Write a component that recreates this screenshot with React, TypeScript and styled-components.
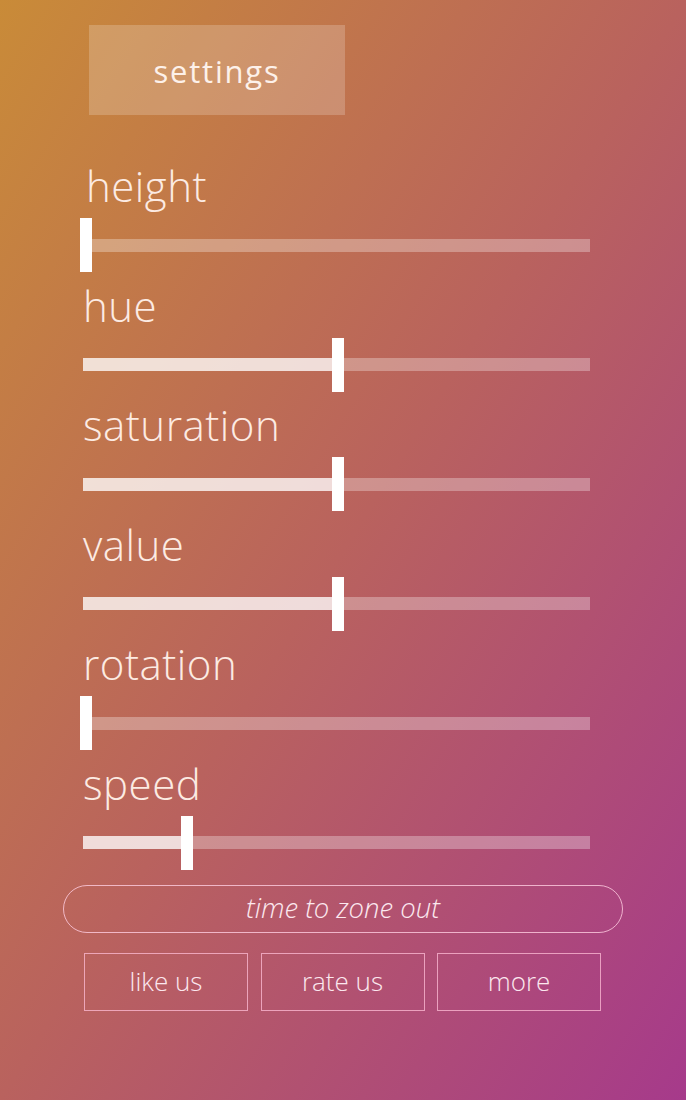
import React from "react";
import styled, { createGlobalStyle } from "styled-components";

const GlobalStyle = createGlobalStyle`
  html, body {
    margin: 0;
    padding: 0;
  }
  body {
    font-family: "Open Sans", "Noto Sans", sans-serif;
    color: #fcebe3;
  }
  * { box-sizing: border-box; }
`;

const Page = styled.div`
  width: 686px;
  min-height: 1100px;
  background: linear-gradient(to bottom right, #c98b38 0%, #b9625e 50%, #a63a8b 100%);
  padding-top: 25px;
  display: flex;
  flex-direction: column;
`;

const SettingsBox = styled.div`
  margin-left: 89px;
  width: 256px;
  height: 90px;
  background: rgba(255, 255, 255, 0.2);
  display: flex;
  align-items: center;
  justify-content: center;
  font-size: 31px;
  font-weight: 400;
  letter-spacing: 1.8px;
  color: #fdf1ea;
  padding-top: 1px;
`;

const SliderList = styled.div`
  margin-top: 43px;
  margin-left: 83px;
  width: 507px;
  display: flex;
  flex-direction: column;
  gap: 5.6px;
`;

const Row = styled.div`
  display: flex;
  flex-direction: column;
`;

const Label = styled.div<{ $indent: number }>`
  height: 56px;
  line-height: 55px;
  font-size: 42px;
  font-weight: 300;
  padding-left: ${(p) => p.$indent}px;
  letter-spacing: 0.5px;
  color: #fcebe3;
  white-space: nowrap;
`;

const SliderArea = styled.div`
  position: relative;
  height: 54px;
  margin-top: 4px;
  display: flex;
  align-items: center;
`;

const Track = styled.div`
  width: 100%;
  height: 13px;
  background: rgba(255, 255, 255, 0.3);
  display: flex;
`;

const Fill = styled.div`
  height: 100%;
  background: rgba(255, 255, 255, 0.68);
`;

const Thumb = styled.div`
  position: absolute;
  top: 0;
  width: 12px;
  height: 54px;
  background: #ffffff;
`;

const Footer = styled.div`
  margin-top: 15px;
  display: flex;
  flex-direction: column;
  align-items: flex-start;
`;

const Pill = styled.button`
  margin-left: 63px;
  width: 560px;
  height: 48px;
  border: 1.5px solid rgba(255, 205, 225, 0.8);
  border-radius: 24px;
  background: transparent;
  font-family: "Open Sans", "Noto Sans", sans-serif;
  font-style: italic;
  font-weight: 300;
  font-size: 27.5px;
  color: #fce8ef;
  display: flex;
  align-items: center;
  justify-content: center;
  padding: 0 0 2px 0;
`;

const ButtonRow = styled.div`
  margin-top: 20px;
  margin-left: 84px;
  display: flex;
  gap: 12.5px;
`;

const LinkButton = styled.button`
  width: 164px;
  height: 58px;
  border: 1.5px solid rgba(255, 190, 215, 0.75);
  background: transparent;
  font-family: "Open Sans", "Noto Sans", sans-serif;
  font-weight: 300;
  font-size: 26px;
  color: #fce8ef;
  display: flex;
  align-items: center;
  justify-content: center;
  padding: 0 0 2px 0;
`;

type SliderDef = { name: string; value: number; indent: number };

const sliders: SliderDef[] = [
  { name: "height", value: 0, indent: 3 },
  { name: "hue", value: 0.5, indent: -4 },
  { name: "saturation", value: 0.5, indent: -4 },
  { name: "value", value: 0.5, indent: -4 },
  { name: "rotation", value: 0, indent: -4 },
  { name: "speed", value: 0.2, indent: -4 },
];

const THUMB_RANGE = 504;

function Slider({ def }: { def: SliderDef }) {
  const thumbLeft = -3 + def.value * THUMB_RANGE;
  const fillWidth = def.value === 0 ? 0 : thumbLeft + 6;
  return (
    <Row>
      <Label $indent={def.indent}>{def.name}</Label>
      <SliderArea>
        <Track>
          <Fill style={{ width: `${fillWidth}px` }} />
        </Track>
        <Thumb style={{ left: `${thumbLeft}px` }} />
      </SliderArea>
    </Row>
  );
}

export default function App() {
  return (
    <>
      <GlobalStyle />
      <Page>
        <SettingsBox>settings</SettingsBox>
        <SliderList>
          {sliders.map((s) => (
            <Slider key={s.name} def={s} />
          ))}
        </SliderList>
        <Footer>
          <Pill>time to zone out</Pill>
          <ButtonRow>
            <LinkButton>like us</LinkButton>
            <LinkButton>rate us</LinkButton>
            <LinkButton>more</LinkButton>
          </ButtonRow>
        </Footer>
      </Page>
    </>
  );
}
